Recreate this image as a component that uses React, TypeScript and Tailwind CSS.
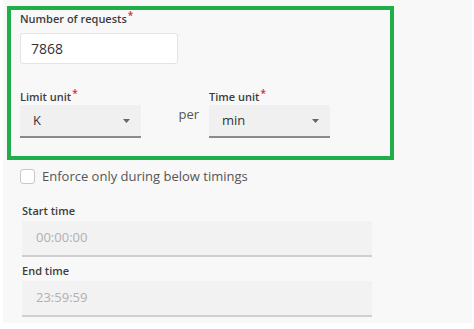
import React from "react";

function Caret() {
  return (
    <svg width="7" height="4" viewBox="0 0 7 4" className="shrink-0">
      <path d="M0 0 L7 0 L3.5 4 Z" fill="#666" />
    </svg>
  );
}

function Label({ text, req }: { text: string; req?: boolean }) {
  return (
    <div className="h-[14px] leading-[14px] text-[11px] font-semibold text-[#3d3d3d] flex items-start">
      <span>{text}</span>
      {req && <span className="text-[#d6283a] text-[10px] leading-[10px] ml-[1px] -mt-[2px]">*</span>}
    </div>
  );
}

function Select({ value }: { value: string }) {
  return (
    <div className="w-[121px] h-[33px] bg-[#f0f0f0] border-b-[2px] border-[#8a8a8a] rounded-t-[2px] flex items-center justify-between pl-[13px] pr-[11px] text-[13px] text-[#333]">
      <span>{value}</span>
      <Caret />
    </div>
  );
}

function TimeInput({ value }: { value: string }) {
  return (
    <div className="w-[350px] h-[36px] bg-[#f2f2f2] border-b-[2px] border-[#cfcfcf] flex items-center pl-[14px] text-[13px] text-[#b0b0b0]">
      {value}
    </div>
  );
}

export default function App() {
  return (
    <div
      className="w-[474px] h-[329px] bg-white overflow-hidden"
      style={{ fontFamily: '"Open Sans", "Liberation Sans", sans-serif' }}
    >
      <div className="ml-[3px] w-[469px] h-[323px] bg-[#f8f8f8] pt-[6px]">
        <div className="ml-[4px] w-[387px] h-[154px] border-4 border-[#22ad4b] pl-[9px] pt-[2px]">
          <Label text="Number of requests" req />
          <div className="mt-[7px] w-[158px] h-[31px] bg-white border border-[#e3e3e3] rounded-[3px] flex items-center pl-[10px] text-[14px] text-[#333]">
            7868
          </div>
          <div className="mt-[26px] flex items-start">
            <div className="flex flex-col">
              <Label text="Limit unit" req />
              <div className="mt-[1px]">
                <Select value="K" />
              </div>
            </div>
            <div className="w-[68px] pt-[15px] flex justify-end pr-[10px] text-[13px] text-[#555]">
              per
            </div>
            <div className="flex flex-col">
              <Label text="Time unit" req />
              <div className="mt-[1px]">
                <Select value="min" />
              </div>
            </div>
          </div>
        </div>
        <div className="mt-[7px] ml-[17px] flex items-center">
          <div className="w-[15px] h-[15px] bg-white border border-[#c8c8c8] rounded-[3px]" />
          <span className="ml-[7px] text-[13px] text-[#555]">Enforce only during below timings</span>
        </div>
        <div className="ml-[19px] mt-[17px]">
          <Label text="Start time" />
          <div className="mt-[3px]">
            <TimeInput value="00:00:00" />
          </div>
          <div className="mt-[7px]">
            <Label text="End time" />
          </div>
          <div className="mt-[3px]">
            <TimeInput value="23:59:59" />
          </div>
        </div>
      </div>
    </div>
  );
}
